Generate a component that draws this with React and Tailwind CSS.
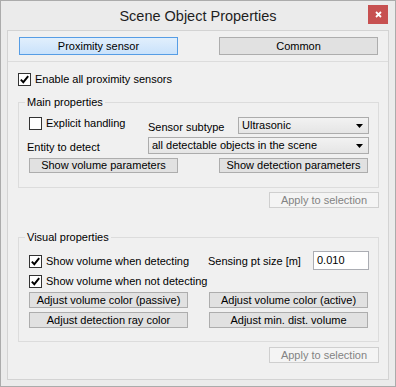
import React, { useState } from 'react';

const Check = ({ checked, onChange }) => (
  <button
    type="button"
    onClick={onChange}
    className="w-[13px] h-[13px] shrink-0 border border-[#333333] bg-white flex items-center justify-center p-0"
  >
    {checked && (
      <svg width="11" height="11" viewBox="0 0 11 11">
        <path d="M1.8 5.6 L4.3 8.2 L9.2 2.2" fill="none" stroke="#000" strokeWidth="1.9" />
      </svg>
    )}
  </button>
);

const CheckRow = ({ label, checked, onChange, className = '' }) => (
  <div className={`flex items-center gap-[4px] ${className}`}>
    <Check checked={checked} onChange={onChange} />
    <span className="leading-[13px] whitespace-nowrap">{label}</span>
  </div>
);

const Btn = ({ children, className = '' }) => (
  <button
    type="button"
    className={`flex items-center justify-center border border-[#adadad] bg-[#e1e1e1] leading-none whitespace-nowrap ${className}`}
  >
    {children}
  </button>
);

const Combo = ({ value, className = '' }) => (
  <div
    className={`flex items-center justify-between border border-[#acacac] bg-gradient-to-b from-[#f2f2f2] to-[#e5e5e5] pl-[3px] pr-[5px] ${className}`}
  >
    <span className="whitespace-nowrap leading-none">{value}</span>
    <svg width="7" height="4" viewBox="0 0 7 4">
      <path d="M0 0 H7 L3.5 4 Z" fill="#000" />
    </svg>
  </div>
);

const Group = ({ title, children, className = '' }) => (
  <div className={`relative ml-[10px] w-[361px] border border-[#dcdcdc] ${className}`}>
    <span className="absolute left-[6px] -top-[8px] px-[2px] bg-[#f0f0f0] leading-[14px] whitespace-nowrap">
      {title}
    </span>
    {children}
  </div>
);

const ApplyButton = ({ className = '' }) => (
  <button
    type="button"
    disabled
    className={`ml-[261px] w-[110px] h-[16px] flex items-center justify-center border border-[#cfcfcf] bg-[#f4f4f4] text-[#838383] leading-none ${className}`}
  >
    Apply to selection
  </button>
);

export default function App() {
  const [activeTab, setActiveTab] = useState('proximity');
  const [enableAll, setEnableAll] = useState(true);
  const [explicit, setExplicit] = useState(false);
  const [showDetecting, setShowDetecting] = useState(true);
  const [showNotDetecting, setShowNotDetecting] = useState(true);

  return (
    <div className="w-[396px] h-[387px] border border-[#ababab] bg-[#ebebeb] flex flex-col font-['Liberation_Sans',Arial,sans-serif] text-[11px] text-black">
      {/* title bar */}
      <div className="relative h-[29px] flex items-center justify-center">
        <span className="text-[14.5px] text-[#1e1e1e] leading-none mt-[1px]">Scene Object Properties</span>
        <button
          type="button"
          className="absolute right-[7px] top-[4px] w-[20px] h-[19px] bg-[#c75050] flex items-center justify-center"
        >
          <svg width="7" height="7" viewBox="0 0 7 7">
            <path d="M1 1 L6 6 M6 1 L1 6" stroke="#fff" strokeWidth="1.8" />
          </svg>
        </button>
      </div>

      {/* main panel */}
      <div className="mx-[6px] h-[350px] border border-[#d3d3d3] bg-[#f0f0f0] flex flex-col">
        <div className="mt-[6px] pl-[11px] flex gap-[41px]">
          <button
            type="button"
            onClick={() => setActiveTab('proximity')}
            className={`w-[159px] h-[18px] flex items-center justify-center leading-none border ${
              activeTab === 'proximity'
                ? 'border-[#569de5] bg-gradient-to-b from-[#e1effc] to-[#c9e2fb]'
                : 'border-[#adadad] bg-[#e1e1e1]'
            }`}
          >
            Proximity sensor
          </button>
          <button
            type="button"
            onClick={() => setActiveTab('common')}
            className={`w-[159px] h-[18px] flex items-center justify-center leading-none border ${
              activeTab === 'common'
                ? 'border-[#569de5] bg-gradient-to-b from-[#e1effc] to-[#c9e2fb]'
                : 'border-[#adadad] bg-[#e1e1e1]'
            }`}
          >
            Common
          </button>
        </div>

        <div className="mt-[6px] h-px bg-[#dcdcdc]" />

        <CheckRow
          className="mt-[11px] ml-[10px]"
          label="Enable all proximity sensors"
          checked={enableAll}
          onChange={() => setEnableAll(!enableAll)}
        />

        <Group title="Main properties" className="mt-[16px] pt-[14px] pb-[14px] pl-[10px]">
          <div className="flex items-start h-[17px]">
            <CheckRow
              className="w-[119px]"
              label="Explicit handling"
              checked={explicit}
              onChange={() => setExplicit(!explicit)}
            />
            <span className="w-[90px] mt-[2px] leading-[17px] whitespace-nowrap">Sensor subtype</span>
            <Combo className="w-[131px] h-[17px]" value="Ultrasonic" />
          </div>
          <div className="mt-[3px] flex items-start h-[17px]">
            <span className="w-[121px] -ml-[2px] mt-[2px] leading-[17px] whitespace-nowrap">Entity to detect</span>
            <Combo className="w-[221px] h-[17px]" value="all detectable objects in the scene" />
          </div>
          <div className="mt-[4px] flex gap-[41px]">
            <Btn className="w-[149px] h-[15px]">Show volume parameters</Btn>
            <Btn className="w-[149px] h-[15px]">Show detection parameters</Btn>
          </div>
        </Group>

        <ApplyButton className="mt-[4px]" />

        <Group title="Visual properties" className="mt-[29px] pt-[13px] pb-[13px] pl-[10px]">
          <div className="flex items-center h-[19px]">
            <CheckRow
              className="w-[179px] mt-[2px]"
              label="Show volume when detecting"
              checked={showDetecting}
              onChange={() => setShowDetecting(!showDetecting)}
            />
            <span className="w-[105px] mt-[2px] whitespace-nowrap">Sensing pt size [m]</span>
            <div className="w-[56px] h-[19px] border border-[#abadb3] bg-white flex items-center pl-[3px] leading-none">
              0.010
            </div>
          </div>
          <CheckRow
            className="mt-[5px]"
            label="Show volume when not detecting"
            checked={showNotDetecting}
            onChange={() => setShowNotDetecting(!showNotDetecting)}
          />
          <div className="mt-[4px] flex gap-[21px]">
            <Btn className="w-[159px] h-[16px]">Adjust volume color (passive)</Btn>
            <Btn className="w-[159px] h-[16px]">Adjust volume color (active)</Btn>
          </div>
          <div className="mt-[4px] flex gap-[21px]">
            <Btn className="w-[159px] h-[16px]">Adjust detection ray color</Btn>
            <Btn className="w-[159px] h-[16px]">Adjust min. dist. volume</Btn>
          </div>
        </Group>

        <ApplyButton className="mt-[5px]" />
      </div>
    </div>
  );
}
